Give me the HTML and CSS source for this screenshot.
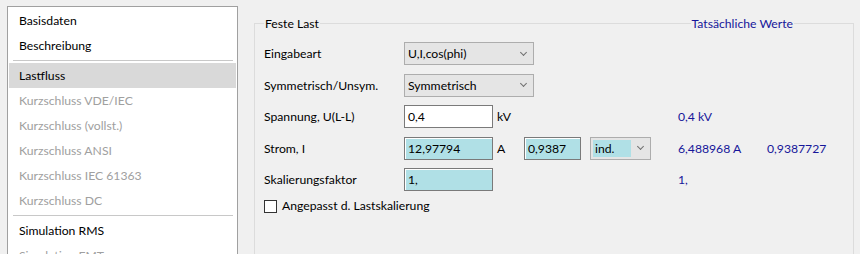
FILE: index.html
```html
<!DOCTYPE html>
<html lang="de">
  <head>
    <meta charset="UTF-8" />
    <title>Lastfluss</title>
    <link rel="stylesheet" href="styles.css">
  </head>
  <body>
    <div class="page">
      <ul class="nav">
        <li>Basisdaten</li>
        <li>Beschreibung</li>
        <li class="sep"></li>
        <li class="active">Lastfluss</li>
        <li class="off">Kurzschluss VDE/IEC</li>
        <li class="off">Kurzschluss (vollst.)</li>
        <li class="off">Kurzschluss ANSI</li>
        <li class="off">Kurzschluss IEC 61363</li>
        <li class="off">Kurzschluss DC</li>
        <li class="sep"></li>
        <li>Simulation RMS</li>
        <li class="off">Simulation EMT</li>
      </ul>

      <div class="group">
        <div class="group-head">
          <span class="title">Feste Last</span>
          <span class="title actual">Tatsächliche Werte</span>
        </div>

        <div class="form">
          <div class="label">Eingabeart</div>
          <div class="ctrl">
            <div class="combo wide"><span>U,I,cos(phi)</span><i class="chev"></i></div>
          </div>
          <div></div><div></div>

          <div class="label">Symmetrisch/Unsym.</div>
          <div class="ctrl">
            <div class="combo wide"><span>Symmetrisch</span><i class="chev"></i></div>
          </div>
          <div></div><div></div>

          <div class="label">Spannung, U(L-L)</div>
          <div class="ctrl">
            <div class="box">0,4</div>
            <span class="unit">kV</span>
          </div>
          <div class="val">0,4 kV</div><div></div>

          <div class="label">Strom, I</div>
          <div class="ctrl">
            <div class="box calc">12,97794</div>
            <span class="unit">A</span>
            <div class="box calc small">0,9387</div>
            <div class="combo tiny"><span class="sel">ind.</span><i class="chev"></i></div>
          </div>
          <div class="val">6,488968 A</div><div class="val">0,9387727</div>

          <div class="label">Skalierungsfaktor</div>
          <div class="ctrl">
            <div class="box calc">1,</div>
          </div>
          <div class="val">1,</div><div></div>
        </div>

        <label class="check"><span class="tick"></span>Angepasst d. Lastskalierung</label>
      </div>
    </div>
  </body>
</html>
```

FILE: styles.css
```css
* {
  box-sizing: border-box;
}
html,
body {
  height: 254px;
  overflow: hidden;
}
body {
  margin: 0;
  background: #f0f0f0;
  font-family: "Segoe UI", Lato, "Noto Sans", sans-serif;
  font-size: 12.2px;
  color: #000;
}

.page {
  display: flex;
  align-items: flex-start;
}

/* left list */
.nav {
  list-style: none;
  margin: 6px 0 0 7px;
  padding: 1px 1px;
  width: 231px;
  height: 270px;
  background: #fff;
  border: 1px solid #a0a0a0;
}
.nav li {
  height: 25px;
  line-height: 25px;
  padding-left: 10px;
  white-space: nowrap;
}
.nav li.active {
  background: #d9d9d9;
}
.nav li.off {
  color: #a0a0a0;
}
.nav li.sep {
  height: 5px;
  margin: 0 3px 0 4px;
  border-top: 1px solid #c8c8c8;
  position: relative;
  top: 2px;
}

/* group box */
.group {
  margin: 23px 0 0 16px;
  width: 600px;
  height: 260px;
  border: 1px solid #dcdcdc;
  padding: 0 0 0 9px;
}
.group-head {
  display: flex;
  justify-content: space-between;
  margin-top: -9px;
  height: 17px;
  line-height: 17px;
}
.title {
  background: #f0f0f0;
  padding: 0 1px;
}
.actual {
  color: #16169a;
  margin-right: 59px;
}

.form {
  display: grid;
  grid-template-columns: 140px 274px 89px auto;
  grid-auto-rows: 23px;
  row-gap: 8.5px;
  margin-top: 10px;
  align-items: center;
}
.label {
  white-space: nowrap;
}
.ctrl {
  display: flex;
  align-items: center;
  height: 23px;
}
.val {
  color: #16169a;
  white-space: nowrap;
}

.box {
  width: 89px;
  height: 23px;
  line-height: 21px;
  padding-left: 3px;
  border: 1px solid #7a7a7a;
  background: #fff;
}
.box.calc {
  background: #b0e0e6;
  box-shadow: inset 1px 1px 0 #fff;
}
.box.small {
  width: 57px;
}
.unit {
  width: 31px;
  padding-left: 4px;
}

.combo {
  display: flex;
  align-items: center;
  justify-content: space-between;
  height: 23px;
  padding: 0 7px 0 3px;
  border: 1px solid #adadad;
  background: #e5e5e5;
}
.combo.wide {
  width: 130px;
}
.combo.tiny {
  width: 61px;
  margin-left: 9px;
  padding-left: 2px;
}
.combo .sel {
  width: 38px;
  height: 17px;
  line-height: 17px;
  padding-left: 2px;
  background: #b0e0e6;
}
.chev {
  width: 5px;
  height: 5px;
  border-right: 1px solid #707070;
  border-bottom: 1px solid #707070;
  transform: rotate(45deg);
  margin-top: -3px;
}

.check {
  display: flex;
  align-items: center;
  margin-top: 7px;
  line-height: 16px;
}
.tick {
  width: 13px;
  height: 13px;
  border: 1px solid #333;
  background: #fff;
  margin-right: 5px;
}
```
